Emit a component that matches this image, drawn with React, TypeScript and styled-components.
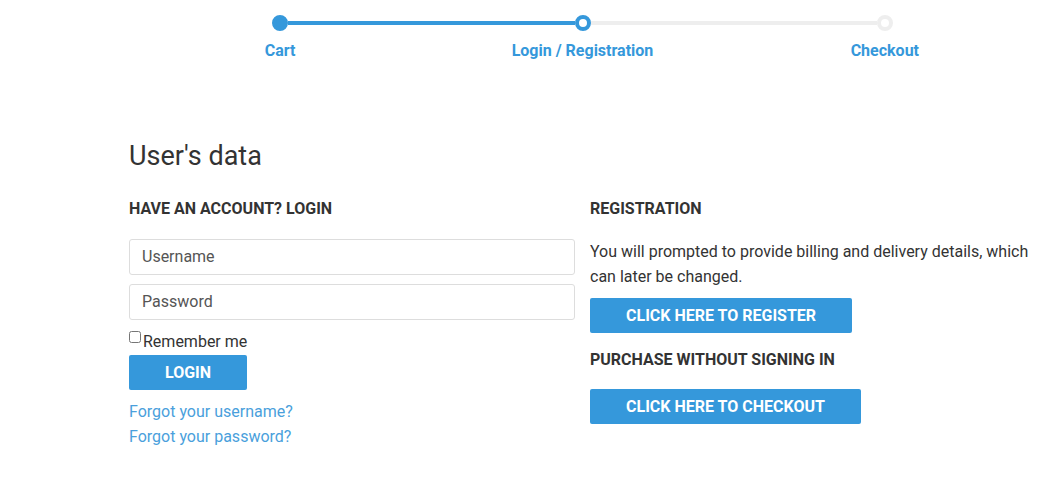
import React from 'react';
import styled, { createGlobalStyle } from 'styled-components';

const GlobalStyle = createGlobalStyle`
  html, body {
    margin: 0;
    padding: 0;
    background: #fff;
  }
  body {
    font-family: Roboto, "Liberation Sans", Arial, sans-serif;
    color: #333;
  }
  * {
    box-sizing: border-box;
  }
`;

const BLUE = '#3598db';
const GRAY = '#eeeeee';

type StepState = 'done' | 'current' | 'todo';

interface Step {
  label: string;
  state: StepState;
}

const steps: Step[] = [
  { label: 'Cart', state: 'done' },
  { label: 'Login / Registration', state: 'current' },
  { label: 'Checkout', state: 'todo' },
];

class App extends React.Component {
  render() {
    return (
      <>
        <GlobalStyle />
        <PageLayout>
          <Stepper>
            {steps.map((step, i) => (
              <StepLayout key={step.label}>
                <Track>
                  <Segment
                    color={i === 0 ? 'transparent' : steps[i].state === 'todo' ? GRAY : BLUE}
                  />
                  <Dot state={step.state} />
                  <Segment
                    color={
                      i === steps.length - 1
                        ? 'transparent'
                        : steps[i + 1].state === 'todo'
                        ? GRAY
                        : BLUE
                    }
                  />
                </Track>
                <StepLabel>{step.label}</StepLabel>
              </StepLayout>
            ))}
          </Stepper>

          <Title>User's data</Title>

          <Columns>
            <Column>
              <SectionTitle>Have an account? Login</SectionTitle>
              <Form>
                <Input placeholder="Username" />
                <Input placeholder="Password" type="password" />
                <Remember>
                  <Checkbox type="checkbox" />
                  Remember me
                </Remember>
                <Button>Login</Button>
                <Links>
                  <Link href="#">Forgot your username?</Link>
                  <Link href="#">Forgot your password?</Link>
                </Links>
              </Form>
            </Column>

            <Column>
              <SectionTitle>Registration</SectionTitle>
              <Paragraph>
                You will prompted to provide billing and delivery details, which
                can later be changed.
              </Paragraph>
              <Button>Click here to register</Button>
              <SectionTitle spaced>Purchase without signing in</SectionTitle>
              <Button>Click here to checkout</Button>
            </Column>
          </Columns>
        </PageLayout>
      </>
    );
  }
}

const PageLayout = styled.div`
  width: 907px;
  margin-left: 129px;
  padding-top: 15px;
`;

const Stepper = styled.div`
  display: grid;
  grid-template-columns: repeat(3, 1fr);
`;

const StepLayout = styled.div`
  display: flex;
  flex-direction: column;
  align-items: center;
`;

const Track = styled.div`
  width: 100%;
  height: 16px;
  display: flex;
  align-items: center;
`;

const Segment = styled.div<{ color: string }>`
  flex: 1;
  height: 4px;
  background: ${props => props.color};
`;

const Dot = styled.div<{ state: StepState }>`
  width: 16px;
  height: 16px;
  border-radius: 50%;
  flex-shrink: 0;
  background: ${props => (props.state === 'done' ? BLUE : '#fff')};
  border: 4px solid ${props => (props.state === 'todo' ? GRAY : BLUE)};
`;

const StepLabel = styled.div`
  margin-top: 10px;
  font-size: 16px;
  font-weight: 700;
  line-height: 20px;
  color: ${BLUE};
`;

const Title = styled.h1`
  margin: 79px 0 0;
  font-size: 27px;
  font-weight: 400;
  line-height: 32px;
  color: #333;
`;

const Columns = styled.div`
  display: grid;
  grid-template-columns: 446px 446px;
  column-gap: 15px;
  margin-top: 27px;
`;

const Column = styled.div`
  display: flex;
  flex-direction: column;
  align-items: flex-start;
`;

const SectionTitle = styled.h3<{ spaced?: boolean }>`
  margin: ${props => (props.spaced ? '17px 0 16px' : '0 0 20px')};
  font-size: 16px;
  font-weight: 700;
  line-height: 20px;
  text-transform: uppercase;
  color: #333;
`;

const Form = styled.div`
  width: 100%;
  display: flex;
  flex-direction: column;
  align-items: flex-start;
`;

const Input = styled.input`
  width: 100%;
  height: 36px;
  margin-bottom: 9px;
  padding: 0 12px 2px;
  border: 1px solid #dddddd;
  border-radius: 3px;
  font-family: Roboto, "Liberation Sans", Arial, sans-serif;
  font-size: 16px;
  color: #555;
  outline: none;

  &::placeholder {
    color: #555;
  }
`;

const Remember = styled.label`
  display: flex;
  align-items: flex-start;
  margin-top: 3px;
  font-size: 16px;
  line-height: 20px;
  color: #333;
`;

const Checkbox = styled.input`
  width: 12px;
  height: 12px;
  margin: -1px 2px 0 0;
`;

const Button = styled.button`
  height: 35px;
  padding: 0 36px;
  margin-top: 3px;
  border: none;
  border-radius: 2px;
  background: ${BLUE};
  color: #fff;
  font-family: Roboto, "Liberation Sans", Arial, sans-serif;
  font-size: 16px;
  font-weight: 700;
  text-transform: uppercase;
  cursor: pointer;
`;

const Links = styled.div`
  display: flex;
  flex-direction: column;
  margin-top: 9px;
`;

const Link = styled.a`
  font-size: 16px;
  line-height: 25px;
  color: #4a9fdc;
  text-decoration: none;
`;

const Paragraph = styled.p`
  margin: 0 0 6px;
  font-size: 16px;
  line-height: 25px;
  color: #333;
`;

export default App;
